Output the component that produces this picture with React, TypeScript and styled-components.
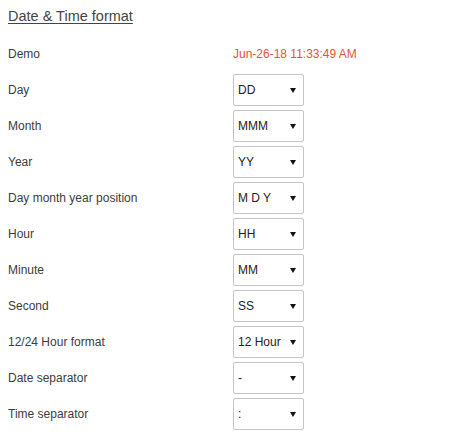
import * as React from 'react';
import styled, { createGlobalStyle } from 'styled-components';

const GlobalStyle = createGlobalStyle`
  html, body {
    margin: 0;
    padding: 0;
    background: #ffffff;
  }
  body {
    font-family: 'Liberation Sans', Arial, sans-serif;
    color: #333333;
  }
`;

const Panel = styled.div`
  padding: 6px 8px 0 8px;
  width: 458px;
`;

const Title = styled.h2`
  margin: 0;
  height: 30px;
  font-size: 14.5px;
  font-weight: normal;
  line-height: 20px;
  color: #444444;
  text-decoration: underline;
  text-decoration-thickness: 1px;
  text-underline-offset: 2px;
`;

const Row = styled.div`
  display: grid;
  grid-template-columns: 225px 1fr;
  align-items: center;
  height: 36px;
`;

const Label = styled.span`
  font-size: 12px;
  color: #3c3c3c;
`;

const DemoValue = styled.span`
  font-size: 12px;
  color: #e5533b;
`;

const SelectWrap = styled.div`
  position: relative;
  width: 71px;
  height: 32px;
`;

const Select = styled.select`
  appearance: none;
  -webkit-appearance: none;
  width: 71px;
  height: 32px;
  margin: 0;
  padding: 0 0 0 4px;
  border: 1px solid #c4c4c4;
  border-radius: 2px;
  background: #ffffff;
  font-family: 'Liberation Sans', Arial, sans-serif;
  font-size: 12px;
  color: #222222;
  outline: none;
`;

const Arrow = styled.svg`
  position: absolute;
  right: 8px;
  top: 14px;
  width: 6px;
  height: 5px;
  pointer-events: none;
`;

interface FieldProps {
  label: string;
  value: string;
  options: string[];
}

const Field = ({ label, value, options }: FieldProps) => (
  <Row>
    <Label>{label}</Label>
    <SelectWrap>
      <Select defaultValue={value}>
        {options.map((o) => (
          <option key={o} value={o}>
            {o}
          </option>
        ))}
      </Select>
      <Arrow viewBox="0 0 6 5">
        <path d="M0 0 H6 L3 5 Z" fill="#111111" />
      </Arrow>
    </SelectWrap>
  </Row>
);

const fields: FieldProps[] = [
  { label: 'Day', value: 'DD', options: ['D', 'DD'] },
  { label: 'Month', value: 'MMM', options: ['M', 'MM', 'MMM', 'MMMM'] },
  { label: 'Year', value: 'YY', options: ['YY', 'YYYY'] },
  { label: 'Day month year position', value: 'M D Y', options: ['D M Y', 'M D Y', 'Y M D'] },
  { label: 'Hour', value: 'HH', options: ['H', 'HH'] },
  { label: 'Minute', value: 'MM', options: ['M', 'MM'] },
  { label: 'Second', value: 'SS', options: ['S', 'SS'] },
  { label: '12/24 Hour format', value: '12 Hour', options: ['12 Hour', '24 Hour'] },
  { label: 'Date separator', value: '-', options: ['-', '/', '.'] },
  { label: 'Time separator', value: ':', options: [':', '.'] },
];

export default function App() {
  return (
    <>
      <GlobalStyle />
      <Panel>
        <Title>Date &amp; Time format</Title>
        <Row>
          <Label>Demo</Label>
          <DemoValue>Jun-26-18 11:33:49 AM</DemoValue>
        </Row>
        {fields.map((f) => (
          <Field key={f.label} {...f} />
        ))}
      </Panel>
    </>
  );
}
